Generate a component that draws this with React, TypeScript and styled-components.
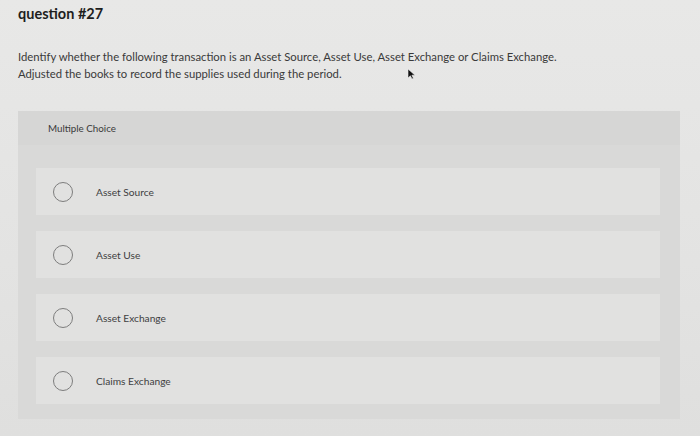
import React from 'react';
import styled, { createGlobalStyle } from 'styled-components';

/* ─── Global ─────────────────────────────────────────────────── */

const GlobalStyle = createGlobalStyle`
  html, body {
    margin: 0;
    padding: 0;
  }
  body {
    background: linear-gradient(180deg, #e8e8e7 0%, #e3e3e2 60%, #dfdfde 100%);
    font-family: Lato, "Open Sans", sans-serif;
    color: #333;
  }
`;

/* ─── Styled Components ─────────────────────────────────────── */

const Page = styled.div`
  position: relative;
  width: 700px;
  height: 436px;
  box-sizing: border-box;
  padding: 5px 20px 0 18px;
  overflow: hidden;
`;

const Title = styled.h1`
  margin: 0;
  font-size: 14.5px;
  font-weight: 700;
  color: #1e1e1e;
  line-height: 18px;
`;

const Prompt = styled.p`
  margin: 25px 0 0;
  font-size: 11.3px;
  line-height: 17px;
  color: #3a3a3a;
`;

const Panel = styled.section`
  margin-top: 29px;
  width: 662px;
  background: #d9d9d8;
  padding-bottom: 15px;
`;

const PanelHeader = styled.div`
  height: 34px;
  display: flex;
  align-items: center;
  padding-left: 30px;
  font-size: 9.8px;
  color: #3a3a3a;
  background: #d6d6d5;
`;

const OptionList = styled.ul`
  list-style: none;
  margin: 0;
  padding: 23px 20px 0 18px;
  display: flex;
  flex-direction: column;
  gap: 16px;
`;

const Option = styled.li`
  height: 47px;
  display: flex;
  align-items: center;
  background: #e1e1e0;
`;

const Radio = styled.span`
  width: 20px;
  height: 20px;
  margin-left: 17px;
  border-radius: 50%;
  border: 1.3px solid #7d7d7d;
  box-sizing: border-box;
  flex-shrink: 0;
`;

const Label = styled.span`
  margin-left: 23px;
  font-size: 10.2px;
  color: #404040;
`;

const Cursor = styled.svg`
  position: absolute;
  left: 407px;
  top: 68px;
`;

/* ─── Component ─────────────────────────────────────────────── */

const choices = ['Asset Source', 'Asset Use', 'Asset Exchange', 'Claims Exchange'];

export default function App() {
  return (
    <>
      <GlobalStyle />
      <Page>
        <Title>question #27</Title>
        <Prompt>
          Identify whether the following transaction is an Asset Source, Asset Use, Asset
          Exchange or Claims Exchange.
          <br />
          Adjusted the books to record the supplies used during the period.
        </Prompt>

        <Panel>
          <PanelHeader>Multiple Choice</PanelHeader>
          <OptionList>
            {choices.map((c) => (
              <Option key={c}>
                <Radio />
                <Label>{c}</Label>
              </Option>
            ))}
          </OptionList>
        </Panel>

        {/* mouse pointer captured in the photo */}
        <Cursor width="9" height="12" viewBox="0 0 9 12">
          <path d="M1 1 L1 10 L3.4 7.8 L5 11 L6.4 10.3 L4.9 7.2 L8 7.2 Z" fill="#111" stroke="#eee" strokeWidth="0.6" />
        </Cursor>
      </Page>
    </>
  );
}
